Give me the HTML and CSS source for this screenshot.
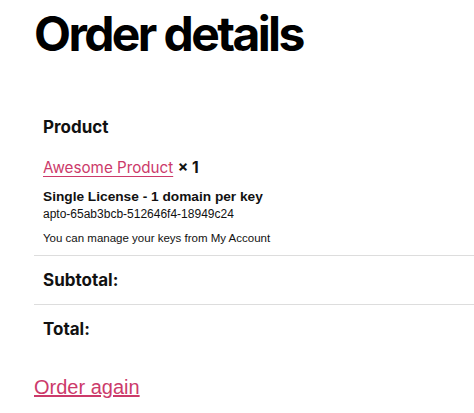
FILE: index.html
```html
<!DOCTYPE html>
<html>
    <head>
        <meta charset="utf-8">
        <title>Order details</title>
        <link rel="stylesheet" href="styles.css">
    </head>
    <body>
        <section class="order-details">
            <h2 class="order-title">Order details</h2>

            <table class="order-table">
                <thead>
                    <tr>
                        <th class="col-head">Product</th>
                    </tr>
                </thead>
                <tbody>
                    <tr class="item-row">
                        <td class="item-cell">
                            <a class="item-link" href="#">Awesome Product</a> <strong class="item-qty">&times;&nbsp;1</strong>
                            <div class="license-name">Single License - 1 domain per key</div>
                            <div class="license-key">apto-65ab3bcb-512646f4-18949c24</div>
                            <div class="license-note">You can manage your keys from My Account</div>
                        </td>
                    </tr>
                </tbody>
                <tfoot>
                    <tr class="total-row">
                        <th class="total-label">Subtotal:</th>
                    </tr>
                    <tr class="total-row">
                        <th class="total-label">Total:</th>
                    </tr>
                </tfoot>
            </table>

            <p class="order-again"><a href="#">Order again</a></p>
        </section>
    </body>
</html>
```

FILE: styles.css
```css
*{
    margin: 0px;
    padding: 0px;
}
body{
    background: #fff;
    color: #111;
    font-family: Inter, "Liberation Sans", sans-serif;
}

.order-details{
    padding: 4px 0 0 34px;
}

/* title */
.order-title{
    font-size: 48px;
    font-weight: 700;
    letter-spacing: -2.6px;
    line-height: 60px;
    color: #000;
}

/* table */
.order-table{
    width: 100%;
    margin-top: 45px;
    border-collapse: collapse;
    text-align: left;
}
.col-head{
    font-size: 17px;
    font-weight: 700;
    padding: 8px 9px 20px 9px;
}
.item-cell{
    padding: 0 9px 9px 9px;
    border-bottom: 1px solid #ddd;
}
.item-link{
    font-size: 15.2px;
    color: #cc3a6a;
    text-decoration: underline;
    text-underline-offset: 3px;
}
.item-qty{
    font-size: 15.5px;
}
.license-name{
    margin-top: 10px;
    font-family: "Liberation Sans", sans-serif;
    font-weight: 700;
    font-size: 13.7px;
    line-height: 19px;
}
.license-key{
    font-family: "Liberation Sans", sans-serif;
    font-size: 12px;
    line-height: 17px;
}
.license-note{
    margin-top: 7px;
    font-family: "Liberation Sans", sans-serif;
    font-size: 11.5px;
    line-height: 16px;
}
.total-label{
    font-size: 17px;
    font-weight: 700;
    line-height: 22px;
    padding: 13px 9px 13px 9px;
}
.total-row:first-child .total-label{
    border-bottom: 1px solid #ddd;
}

/* order again */
.order-again{
    margin-top: 23px;
    font-family: "Liberation Sans", sans-serif;
    font-size: 20px;
}
.order-again a{
    color: #cc3a6a;
}
```
